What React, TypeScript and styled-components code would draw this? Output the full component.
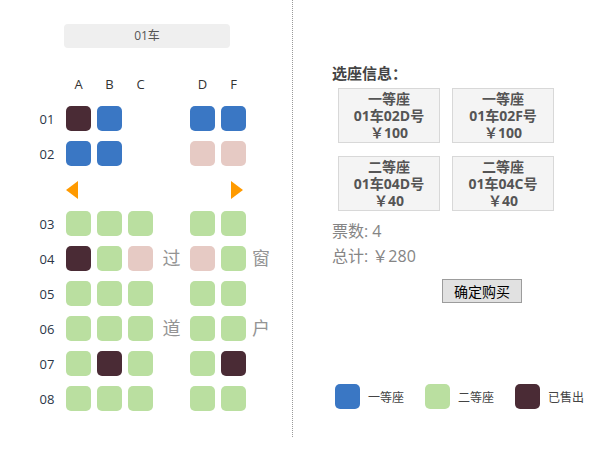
import React from "react";
import styled, { createGlobalStyle } from "styled-components";

const GlobalStyle = createGlobalStyle`
  body {
    margin: 0;
    background: #ffffff;
    font-family: "Open Sans", "Noto Sans CJK SC", sans-serif;
  }
`;

const COLORS = {
  first: "#3a77c4",
  second: "#badfa0",
  sold: "#4a2b35",
  picked: "#e6cac4",
};

type SeatKind = keyof typeof COLORS | "none";

const Page = styled.div`
  display: flex;
  width: 613px;
  height: 450px;
`;

const Left = styled.div`
  width: 292px;
  height: 413px;
  padding-top: 24px;
  border-right: 1px dotted #9a9a9a;
`;

const CarLabel = styled.div`
  margin-left: 64px;
  width: 166px;
  height: 24px;
  line-height: 24px;
  border-radius: 4px;
  background: #efefef;
  color: #555;
  font-size: 12px;
  text-align: center;
`;

const SeatMap = styled.div`
  margin-top: 23px;
  padding-left: 34px;
  display: grid;
  grid-template-columns: 26px repeat(6, 25px) 30px;
  grid-auto-rows: 25px;
  column-gap: 6px;
  row-gap: 10px;
`;

const ColHead = styled.div`
  display: flex;
  align-items: center;
  justify-content: center;
  font-size: 13px;
  color: #333;
`;

const RowLabel = styled.div`
  display: flex;
  align-items: center;
  justify-content: center;
  font-size: 13px;
  color: #2c3648;
`;

const Seat = styled.div<{ $kind: SeatKind }>`
  width: 25px;
  height: 25px;
  border-radius: 5px;
  background: ${(p) => (p.$kind === "none" ? "transparent" : COLORS[p.$kind])};
`;

const SideText = styled.div<{ $align: "center" | "left" }>`
  display: flex;
  align-items: center;
  justify-content: ${(p) => (p.$align === "center" ? "center" : "flex-start")};
  padding-bottom: 3px;
  font-size: 18px;
  color: #949494;
  white-space: nowrap;
  font-family: "Noto Sans CJK SC", sans-serif;
`;

const Arrow = styled.div<{ $dir: "left" | "right" }>`
  align-self: center;
  justify-self: ${(p) => (p.$dir === "left" ? "start" : "end")};
  margin-right: ${(p) => (p.$dir === "left" ? "0" : "3px")};
  margin-top: 3px;
  width: 0;
  height: 0;
  border-top: 9px solid transparent;
  border-bottom: 9px solid transparent;
  ${(p) =>
    p.$dir === "left"
      ? "border-right: 12px solid #ff9a00;"
      : "border-left: 12px solid #ff9a00;"}
`;

const Right = styled.div`
  flex: 1;
  padding-left: 39px;
  padding-top: 63px;
`;

const Title = styled.div`
  font-size: 15px;
  line-height: 20px;
  font-weight: bold;
  color: #444;
`;

const Tickets = styled.div`
  margin: 5px 0 0 6px;
  display: grid;
  grid-template-columns: 102px 102px;
  column-gap: 12px;
  row-gap: 13px;
`;

const Ticket = styled.div`
  box-sizing: border-box;
  height: 55px;
  padding-top: 1px;
  background: #f4f4f4;
  border: 1px solid #d8d8d8;
  text-align: center;
  font-size: 14px;
  font-weight: bold;
  line-height: 17px;
  color: #555;
`;

const Summary = styled.div`
  margin-top: 8px;
  font-size: 16px;
  line-height: 25px;
  color: #858585;
`;

const BuyButton = styled.button`
  display: block;
  margin: 10px 0 0 110px;
  width: 80px;
  height: 24px;
  padding: 0;
  background: #e1e1e1;
  border: 1px solid #9c9c9c;
  font-family: "Noto Sans CJK SC", sans-serif;
  font-size: 14px;
  color: #000;
`;

const Legend = styled.div`
  margin-top: 81px;
  margin-left: 3px;
  display: flex;
  gap: 21px;
`;

const LegendItem = styled.div`
  display: flex;
  align-items: center;
  gap: 8px;
  width: 69px;
  font-size: 12px;
  color: #444;
  white-space: nowrap;
`;

const cols = ["A", "B", "C", "", "D", "F", ""];

const rows: { label: string; seats: SeatKind[]; aisle?: string; window?: string }[] = [
  { label: "01", seats: ["sold", "first", "none", "first", "first"] },
  { label: "02", seats: ["first", "first", "none", "picked", "picked"] },
  { label: "03", seats: ["second", "second", "second", "second", "second"] },
  { label: "04", seats: ["sold", "second", "picked", "picked", "second"], aisle: "过", window: "窗" },
  { label: "05", seats: ["second", "second", "second", "second", "second"] },
  { label: "06", seats: ["second", "second", "second", "second", "second"], aisle: "道", window: "户" },
  { label: "07", seats: ["second", "sold", "second", "second", "sold"] },
  { label: "08", seats: ["second", "second", "second", "second", "second"] },
];

const tickets = [
  ["一等座", "01车02D号", "￥100"],
  ["一等座", "01车02F号", "￥100"],
  ["二等座", "01车04D号", "￥40"],
  ["二等座", "01车04C号", "￥40"],
];

const SeatRow = ({ row }: { row: (typeof rows)[number] }) => (
  <>
    <RowLabel>{row.label}</RowLabel>
    <Seat $kind={row.seats[0]} />
    <Seat $kind={row.seats[1]} />
    <Seat $kind={row.seats[2]} />
    <SideText $align="center">{row.aisle}</SideText>
    <Seat $kind={row.seats[3]} />
    <Seat $kind={row.seats[4]} />
    <SideText $align="left">{row.window}</SideText>
  </>
);

const App = () => {
  return (
    <Page>
      <GlobalStyle />
      <Left>
        <CarLabel>01车</CarLabel>
        <SeatMap>
          <div />
          {cols.map((c, i) => (
            <ColHead key={i}>{c}</ColHead>
          ))}
          {rows.slice(0, 2).map((r) => (
            <SeatRow key={r.label} row={r} />
          ))}
          <div />
          <Arrow $dir="left" />
          <div />
          <div />
          <div />
          <div />
          <Arrow $dir="right" />
          <div />
          {rows.slice(2).map((r) => (
            <SeatRow key={r.label} row={r} />
          ))}
        </SeatMap>
      </Left>
      <Right>
        <Title>选座信息：</Title>
        <Tickets>
          {tickets.map((t) => (
            <Ticket key={t[1]}>
              <div>{t[0]}</div>
              <div>{t[1]}</div>
              <div>{t[2]}</div>
            </Ticket>
          ))}
        </Tickets>
        <Summary>
          <div>票数: 4</div>
          <div>总计: ￥280</div>
        </Summary>
        <BuyButton>确定购买</BuyButton>
        <Legend>
          <LegendItem>
            <Seat $kind="first" />
            一等座
          </LegendItem>
          <LegendItem>
            <Seat $kind="second" />
            二等座
          </LegendItem>
          <LegendItem>
            <Seat $kind="sold" />
            已售出
          </LegendItem>
        </Legend>
      </Right>
    </Page>
  );
};

export default App;
